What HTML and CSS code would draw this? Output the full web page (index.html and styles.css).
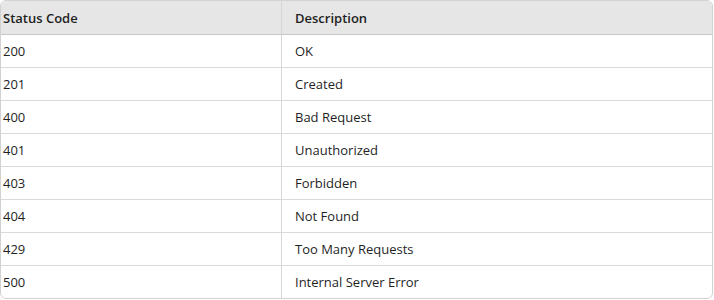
FILE: index.html
```html
<!DOCTYPE html>
<html>
<head>
<meta charset="utf-8">
<link rel="stylesheet" href="styles.css">
</head>
<body>
<div class="table-wrap">
  <table class="codes">
    <thead>
      <tr><th class="c1">Status Code</th><th class="c2">Description</th></tr>
    </thead>
    <tbody>
      <tr><td class="c1">200</td><td class="c2">OK</td></tr>
      <tr><td class="c1">201</td><td class="c2">Created</td></tr>
      <tr><td class="c1">400</td><td class="c2">Bad Request</td></tr>
      <tr><td class="c1">401</td><td class="c2">Unauthorized</td></tr>
      <tr><td class="c1">403</td><td class="c2">Forbidden</td></tr>
      <tr><td class="c1">404</td><td class="c2">Not Found</td></tr>
      <tr><td class="c1">429</td><td class="c2">Too Many Requests</td></tr>
      <tr><td class="c1">500</td><td class="c2">Internal Server Error</td></tr>
    </tbody>
  </table>
</div>
</body>
</html>
```
FILE: styles.css
```css
html, body {
  margin: 0;
  padding: 0;
  background: #ffffff;
}
body {
  font-family: "Open Sans", "Noto Sans", sans-serif;
  font-size: 13px;
  color: #1f1f1f;
}
.table-wrap {
  width: 711px;
  border: 1px solid #d2d2d2;
  border-radius: 6px;
  overflow: hidden;
}
.codes {
  width: 100%;
  border-collapse: collapse;
  table-layout: fixed;
}
.codes th, .codes td {
  text-align: left;
  padding: 0;
  vertical-align: middle;
}
.codes th {
  height: 33px;
  background: #e6e6e6;
  font-weight: 600;
  border-bottom: 1px solid #c8c8c8;
}
.codes td {
  height: 32px;
  border-bottom: 1px solid #dadada;
}
.codes tbody tr:last-child td {
  border-bottom: none;
}
.c1 {
  width: 278px;
  padding-left: 2px !important;
  border-right: 1px solid #d6d6d6;
}
.c2 {
  padding-left: 13px !important;
}
```
